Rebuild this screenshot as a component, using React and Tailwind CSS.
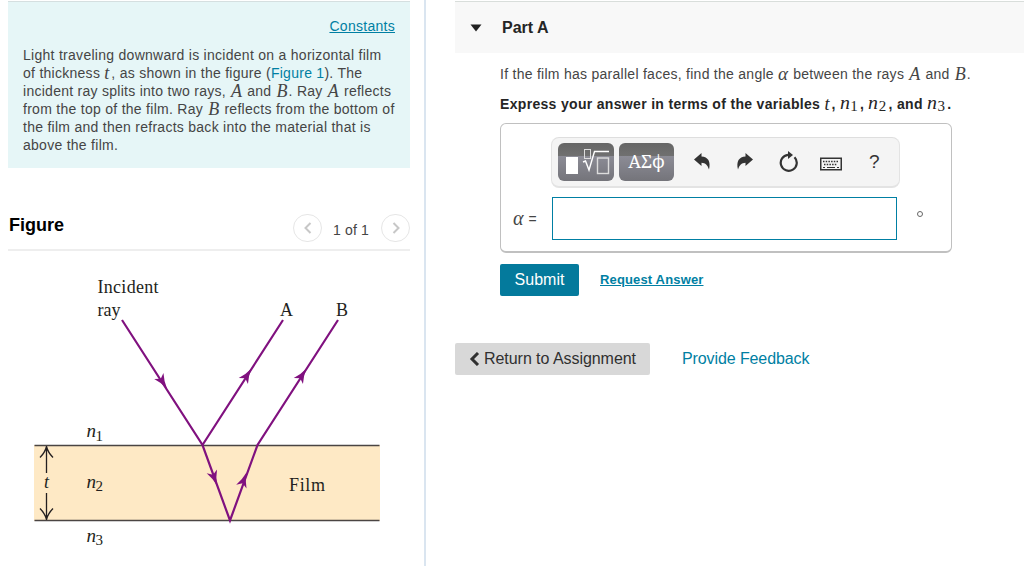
import React from 'react'

const arrows = [
    { x: 167, y: 388.5, angle: 57 },
    { x: 251.5, y: 368.5, angle: -57 },
    { x: 306.5, y: 368.5, angle: -57 },
    { x: 217, y: 485.5, angle: 70 },
    { x: 246.5, y: 472.5, angle: -70 },
]

const V = ({ children, className = '' }) => (
    <i
        className={`font-['Liberation_Serif',serif] align-[-0.5px] leading-[0] font-normal tracking-normal ${className}`}
    >
        {children}
    </i>
)

const N = ({ sub }) => (
    <span className="mr-0.5 font-['Liberation_Serif',serif] text-[18px] leading-[0] font-normal">
        <i className="mr-px inline-block origin-left scale-x-110">n</i>
        <sub className="bottom-[-2px] text-[15px] leading-[0]">{sub}</sub>
    </span>
)

const Line = ({ children, className = '' }) => (
    <span className={`block h-[18px] leading-[18px] whitespace-nowrap ${className}`}>
        {children}
    </span>
)

const FilmFigure = () => (
    <svg
        className="mt-px block h-[314px] w-[402px] font-['Liberation_Serif',serif]"
        viewBox="8 252 402 314"
        fontSize="18"
        fill="#231f20"
    >
        <rect x="34" y="445" width="346" height="76" fill="#fee9c5" />
        <path d="M34.500 445.500H379.500M34.500 520.500H379.500" stroke="#4a4543" strokeWidth="1.4" />
        {/* thickness marker */}
        <path
            d="M46.500 446V473M46.500 493V520M40 457.500Q45 452.500 46.500 446.500Q48 452.500 53 457.500M40 508.500Q45 513.500 46.500 519.500Q48 513.500 53 508.500"
            fill="none"
            stroke="#231f20"
            strokeWidth="1.3"
        />
        <path
            d="M122 320L202.500 445L230 520.500L257.500 445L338 320M202.500 445L283 320"
            fill="none"
            stroke="#80117f"
            strokeWidth="2.200"
        />
        {arrows.map((a, index) => (
            <path
                key={index}
                transform={`translate(${a.x} ${a.y}) rotate(${a.angle})`}
                d="M0 0Q-8 1.500 -15 5.500L-11.500 0L-15 -5.500Q-8 -1.500 0 0Z"
                fill="#80117f"
            />
        ))}
        <text x="97.500" y="292.500" textLength="61">Incident</text>
        <text x="97.500" y="316" textLength="23">ray</text>
        <text x="280" y="315.500">A</text>
        <text x="336" y="315.500">B</text>
        <text x="289" y="491" textLength="36">Film</text>
        <text x="44" y="488" fontStyle="italic">t</text>
        <text x="86.500" y="437" fontStyle="italic" fontSize="19">n</text>
        <text x="95.500" y="441" fontSize="15">1</text>
        <text x="86.500" y="488" fontStyle="italic" fontSize="19">n</text>
        <text x="95.500" y="491" fontSize="15">2</text>
        <text x="86.500" y="541.500" fontStyle="italic" fontSize="19">n</text>
        <text x="95.500" y="545" fontSize="15">3</text>
    </svg>
)

const LeftPanel = () => (
    <div className="w-[426px] shrink-0 border-r-2 border-[#dae5f0] pl-2">
        <div className="mt-px h-[167px] w-[402px] border-t border-[#d5dfe0] bg-[#e6f6f7] px-[15px] pt-[15px]">
            <div className="text-right">
                <a className="block text-[14px] leading-[18px] tracking-[0.28px] text-[#007fa3] underline">
                    Constants
                </a>
            </div>
            <p className="pt-[11px] text-[14px] text-[#454545]">
                <Line className="tracking-[0.28px]">
                    Light traveling downward is incident on a horizontal film
                </Line>
                <Line className="tracking-[0.27px]">
                    of thickness <V className="mr-[2px] text-[18px]">t</V>, as shown in the figure (
                    <a className="text-[#007fa3]">Figure 1</a>). The
                </Line>
                <Line className="tracking-[0.27px]">
                    incident ray splits into two rays, <V className="mx-px text-[18px]">A</V> and{' '}
                    <V className="mx-px text-[18px]">B</V>. Ray{' '}
                    <V className="mx-px text-[18px]">A</V> reflects
                </Line>
                <Line className="tracking-[0.28px]">
                    from the top of the film. Ray <V className="mx-px text-[18px]">B</V> reflects
                    from the bottom of
                </Line>
                <Line className="tracking-[0.27px]">
                    the film and then refracts back into the material that is
                </Line>
                <Line className="tracking-[0.27px]">above the film.</Line>
            </p>
        </div>
        <div className="mt-[45px] flex h-[38px] w-[402px] items-start justify-between border-b-2 border-[#eeeeee]">
            <h2 className="pl-px text-[18px] leading-6 font-bold text-black">Figure</h2>
            <div className="flex items-center pt-px text-[14px] text-[#454545]">
                <button className="flex h-[28px] w-[29px] items-center justify-center rounded-full border border-[#e6e6e6]">
                    <svg width="8" height="12" fill="none" stroke="#c7c7c7" strokeWidth="2">
                        <path d="M6.500 1L1.500 6L6.500 11" />
                    </svg>
                </button>
                <span className="w-[59px] pt-1 pr-px text-center tracking-[0.2px]">1 of 1</span>
                <button className="flex h-[28px] w-[29px] items-center justify-center rounded-full border border-[#e6e6e6]">
                    <svg width="8" height="12" fill="none" stroke="#c7c7c7" strokeWidth="2">
                        <path d="M1.500 1L6.500 6L1.500 11" />
                    </svg>
                </button>
            </div>
        </div>
        <FilmFigure />
    </div>
)

const Toolbar = () => (
    <div className="flex h-[51px] w-[349px] items-center rounded-lg border border-b-2 border-[#e3e3e3] border-t-[#dedede] bg-[#f4f4f4] pl-[6px] text-[#333333]">
        <button className="h-[38px] w-[56px] rounded-md bg-[linear-gradient(#666666_0px,#707070_13px,#8c8c96_13px,#74747a_38px)]">
            <svg width="56" height="38" fill="none" stroke="#fff">
                <rect x="8" y="14" width="12" height="17" fill="#fff" stroke="none" />
                <rect x="26.500" y="6.500" width="6" height="9" stroke="#dddddd" />
                <path d="M25 19L27.500 18L31 27L36.500 8.500H51" strokeWidth="1.4" />
                <rect x="39.500" y="15" width="11" height="15.500" stroke="#dddddd" strokeWidth="1.4" />
            </svg>
        </button>
        <button className="ml-[5px] h-[38px] w-[55px] rounded-md bg-[linear-gradient(#666666_0px,#707070_13px,#8c8c96_13px,#74747a_38px)] pb-0.5 font-['Noto_Serif','DejaVu_Serif',serif] text-[18px] text-white">
            ΑΣϕ
        </button>
        <svg className="ml-[19px] h-[20px] w-[18px]" viewBox="0 0 18 20" fill="currentColor">
            <path d="M1 7.500L8.500 1V4.500C15 4.800 18 9.500 16 17.500C14.500 13 12.500 11 8.500 10.800V14Z" />
        </svg>
        <svg className="ml-[25px] h-[20px] w-[18px]" viewBox="0 0 18 20" fill="currentColor">
            <path d="M17 7.500L9.500 1V4.500C3 4.800 0 9.500 2 17.500C3.500 13 5.500 11 9.500 10.800V14Z" />
        </svg>
        <svg className="ml-[25px] h-[22px] w-[20px]" viewBox="0 0 20 22" fill="none">
            <path d="M15.500 6.200A8 8 0 1 1 9 3.800" stroke="currentColor" strokeWidth="2.200" />
            <path d="M9 0L14 4L9 8Z" fill="currentColor" />
        </svg>
        <svg className="mt-[3px] ml-[21px] h-[14px] w-[22px]" viewBox="0 0 22 14" fill="none" stroke="currentColor">
            <rect x="0.750" y="1.250" width="20.500" height="11.500" strokeWidth="1.500" />
            <path d="M3 4.500H19M4 7.500H17" strokeWidth="1.500" strokeDasharray="1.500 1.200" />
            <path d="M3 10.500H5M7 10.500H15M17 10.500H19" strokeWidth="1.200" />
        </svg>
        <span className="ml-[27px] text-[19px] leading-6">?</span>
    </div>
)

const AnswerBox = () => (
    <div className="h-[130px] w-[452px] rounded-md border border-b-2 border-[#c0c0c0] pt-[13px]">
        <div className="pl-[50px]">
            <Toolbar />
        </div>
        <div className="mt-[9px] flex h-[43px] items-center text-[14px] text-[#454545]">
            <span className="w-[51px] pt-0.5 pl-[12px]">
                <V className="mr-px text-[20px]">α</V> =
            </span>
            <input className="h-[43px] w-[345px] border border-[#007fa3] bg-white" />
            <span className="mb-[9px] ml-[20px] size-[6px] rounded-full border border-[#666666]" />
        </div>
    </div>
)

const PartA = () => (
    <div className="flex-1 pl-[29px]">
        <div className="mt-px flex h-[52px] items-center border-t border-[#d9dedb] bg-[#f8f8f8] pl-[15px]">
            <svg width="12" height="8" fill="#212121">
                <path d="M0.500 0.500H11.500L6 7.500Z" />
            </svg>
            <h1 className="pl-[20px] text-[16px] font-bold text-[#252525]">Part A</h1>
        </div>
        <div className="pl-[45px]">
            <p className="mt-[12px] h-[18px] text-[14px] leading-[18px] tracking-[0.27px] whitespace-nowrap text-[#454545]">
                If the film has parallel faces, find the angle{' '}
                <V className="mr-px text-[19px]">α</V> between the rays{' '}
                <V className="mx-px text-[18px]">A</V> and{' '}
                <V className="mx-px text-[18px]">B</V>.
            </p>
            <p className="mt-[12px] h-[18px] text-[14px] leading-[18px] font-bold tracking-[0.32px] whitespace-nowrap text-[#252525]">
                Express your answer in terms of the variables{' '}
                <V className="mr-[2px] text-[18px]">t</V>, <N sub="1" />, <N sub="2" />, and{' '}
                <N sub="3" />.
            </p>
            <div className="mt-[10px]">
                <AnswerBox />
            </div>
            <div className="mt-[11px] flex items-center">
                <button className="h-[32px] w-[79px] rounded-[2px] bg-[#047a9c] text-[16px] text-white">
                    Submit
                </button>
                <a className="ml-[21px] text-[13px] font-bold tracking-[0.15px] text-[#007fa3] underline">
                    Request Answer
                </a>
            </div>
        </div>
        <div className="mt-[47px] flex items-center">
            <button className="flex h-[32px] w-[195px] items-center rounded-[2px] bg-[#d8d8d8] pl-[14px] text-[16px] text-[#303030]">
                <svg width="11" height="14" fill="none" stroke="#303030" strokeWidth="3">
                    <path d="M9 1L3 7L9 13" />
                </svg>
                <span className="ml-1 tracking-[-0.05px]">Return to Assignment</span>
            </button>
            <a className="ml-8 text-[16px] tracking-[-0.1px] text-[#007fa3]">Provide Feedback</a>
        </div>
    </div>
)

const App = () => {
    return (
        <div className="flex h-[566px] w-[1024px] overflow-hidden bg-white font-['Liberation_Sans',Arial,sans-serif]">
            <LeftPanel />
            <PartA />
        </div>
    )
}

export default App
